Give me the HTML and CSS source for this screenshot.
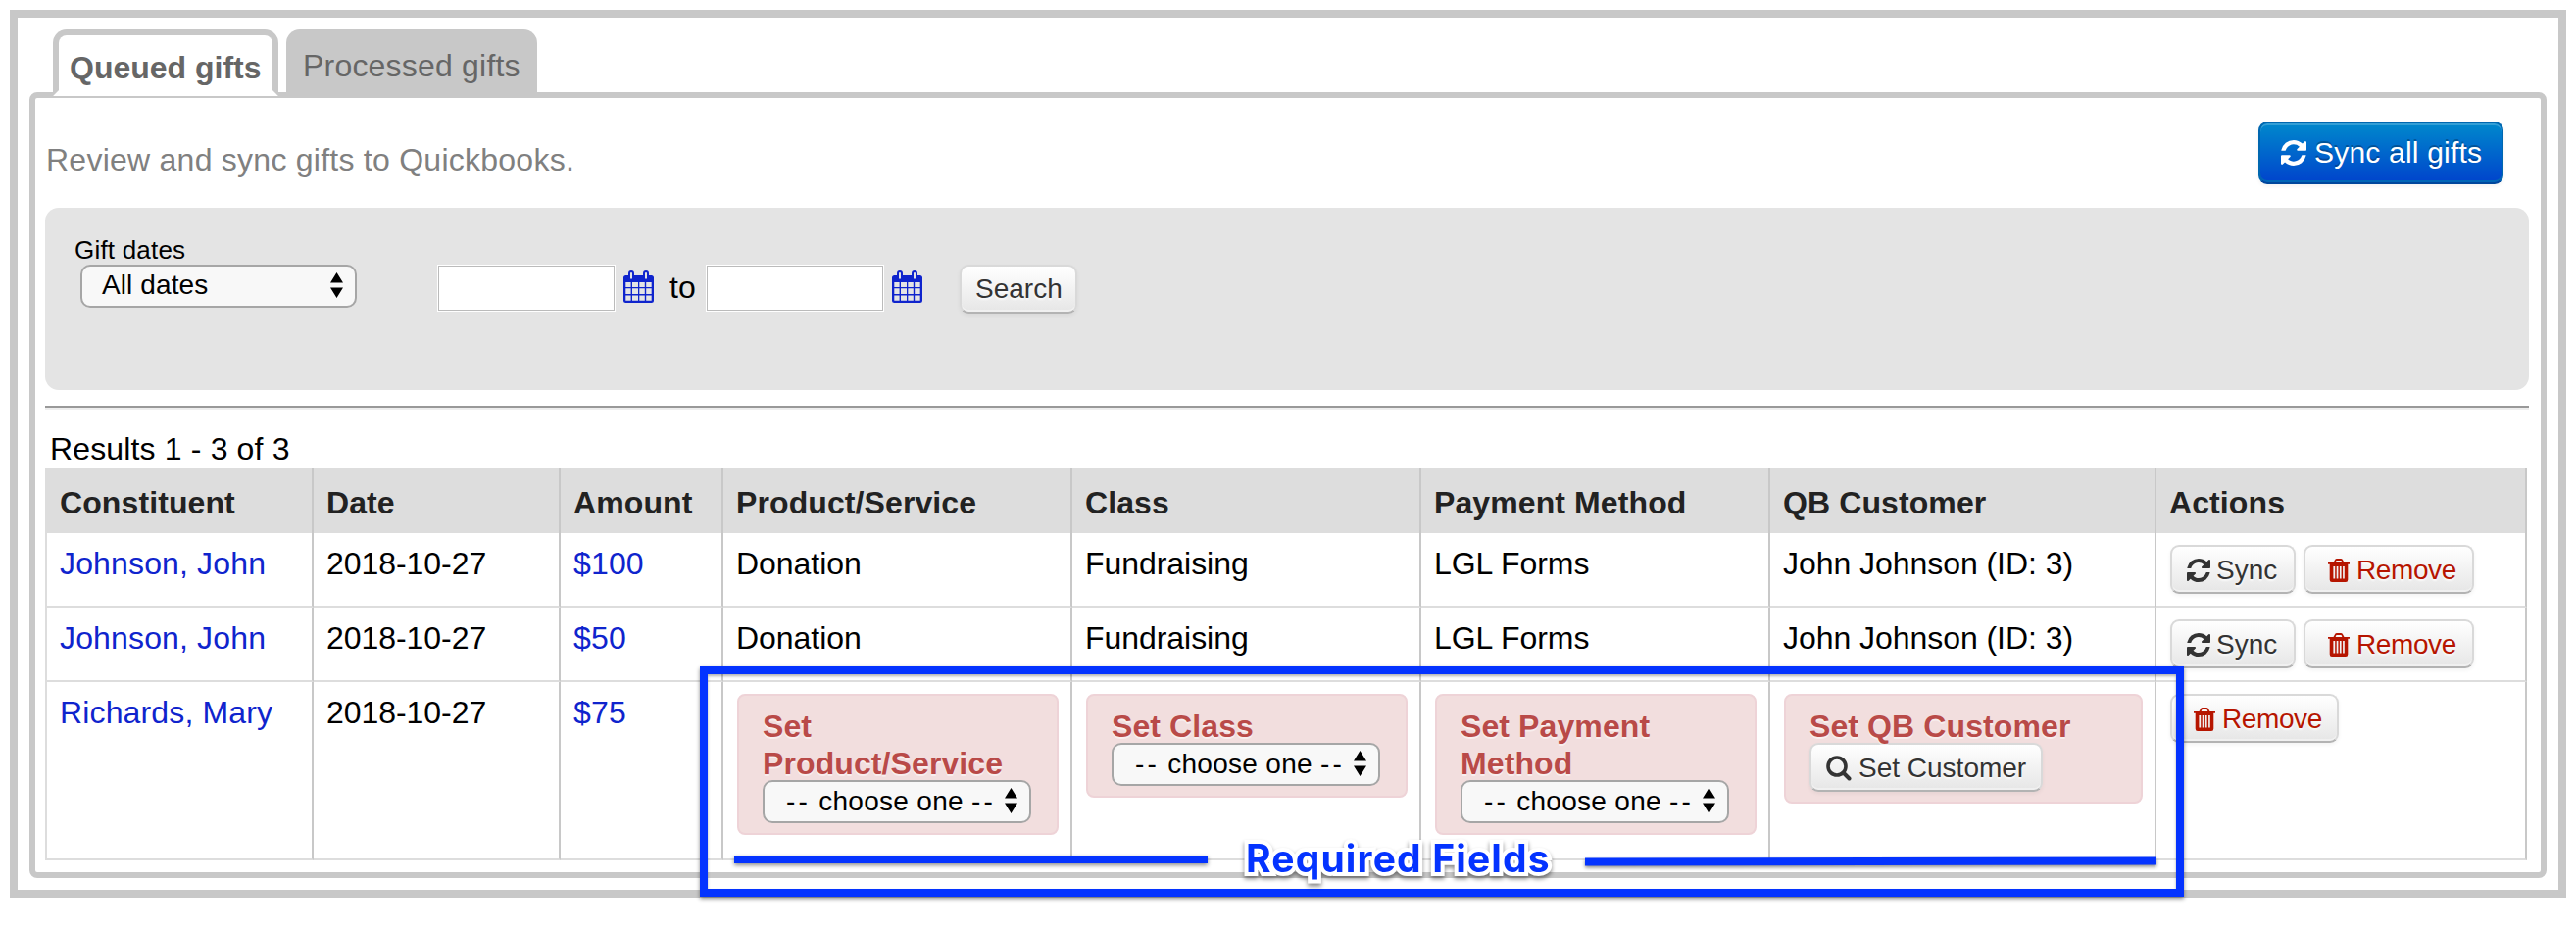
FILE: index.html
```html
<!DOCTYPE html>
<html lang="en">
<head>
    <meta charset="UTF-8">
    <meta name="viewport" content="width=device-width, initial-scale=1.0">
    <title>Quickbooks sync</title>
    <link rel="stylesheet" href="styles.css">
</head>
<body>
    <!-- icon set -->
    <svg class="sprite">
        <symbol id="icon-refresh" viewBox="0 0 1536 1536">
            <path d="M1511 928q0 5-1 7-64 268-268 434.500T764 1536q-146 0-282.500-55T238 1324l-129 129q-19 19-45 19t-45-19-19-45V960q0-26 19-45t45-19h448q26 0 45 19t19 45-19 45l-137 137q71 66 161 102t187 36q134 0 250-65t186-179q11-17 53-117 8-23 30-23h192q13 0 22.500 9.500t9.500 22.500zM1536 128v448q0 26-19 45t-45 19h-448q-26 0-45-19t-19-45 19-45l138-138Q969 256 768 256q-134 0-250 65T332 500q-11 17-53 117-8 23-30 23H50q-13 0-22.500-9.500T18 608v-7q65-268 270-434.500T768 0q146 0 284 55.500T1297 212l130-129q19-19 45-19t45 19 19 45z"/>
        </symbol>
        <symbol id="icon-trash" viewBox="0 0 22 24">
            <path fill-rule="evenodd" d="M0 4h5.500L7 1.200Q7.600 0 9 0h4q1.400 0 2 1.200L16.500 4H22v1.800h-1.700V21.500Q20.300 24 18 24H4Q1.700 24 1.700 21.500V5.800H0zM7.600 4h6.800l-.9-2h-5zM5.400 8v12.500h1.800V8zM8.700 8v12.500h1.700V8zM11.900 8v12.500h1.700V8zM15.100 8v12.500h1.700V8z"/>
        </symbol>
        <symbol id="icon-calendar" viewBox="0 0 31 33">
            <path fill-rule="evenodd" d="M2.500 5H5V3Q5 0 8 0t3 3v2h9V3q0-3 3-3t3 3v2h2.500Q31 5 31 7.500v23Q31 33 28.500 33h-26Q0 33 0 30.500v-23Q0 5 2.500 5zM7 3v5.500h2V3q0-1-1-1T7 3zM22 3v5.500h2V3q0-1-1-1t-1 1zM2.300 12v5h5.300v-5zM9 12v5h6v-5zM16.300 12v5h5.500v-5zM23.200 12v5h5.500v-5zM2.300 18.300V24h5.300v-5.700zM9 18.300V24h6v-5.700zM16.300 18.300V24h5.500v-5.700zM23.200 18.300V24h5.500v-5.700zM2.300 25.500v5.300h5.300v-5.300zM9 25.500v5.300h6v-5.300zM16.300 25.500v5.300h5.500v-5.300zM23.200 25.500v5.300h5.500v-5.300z"/>
        </symbol>
        <symbol id="icon-search" viewBox="0 0 26 26">
            <circle cx="11" cy="11" r="9" fill="none" stroke="currentColor" stroke-width="3.600"/>
            <path d="M17.500 17.500l6 6" stroke="currentColor" stroke-width="4" stroke-linecap="round"/>
        </symbol>
        <symbol id="icon-arrows" viewBox="0 0 13 26">
            <path d="M6.500 0L13 10.500H0zM0 15.500h13L6.500 26z"/>
        </symbol>
    </svg>

    <div class="container">
        <ul class="tabs">
            <li class="tab active">Queued gifts</li>
            <li class="tab">Processed gifts</li>
        </ul>

        <div class="panel">
            <div class="intro">
                <p>Review and sync gifts to Quickbooks.</p>
                <button class="btn btn-primary"><svg class="icon-refresh"><use href="#icon-refresh"/></svg>Sync all gifts</button>
            </div>

            <div class="filters">
                <div class="filter-dates">
                    <label>Gift dates</label>
                    <div class="select">All dates<svg><use href="#icon-arrows"/></svg></div>
                </div>
                <div class="range">
                    <input type="text" class="date-input">
                    <svg class="calendar"><use href="#icon-calendar"/></svg>
                    <span class="to">to</span>
                    <input type="text" class="date-input">
                    <svg class="calendar"><use href="#icon-calendar"/></svg>
                    <button class="btn btn-search">Search</button>
                </div>
            </div>

            <hr>

            <p class="results">Results 1 - 3 of 3</p>
            <table class="gifts">
                <colgroup>
                    <col class="col-name"><col class="col-date"><col class="col-amount"><col class="col-field">
                    <col class="col-field"><col class="col-field"><col class="col-customer"><col class="col-actions">
                </colgroup>
                <thead>
                    <tr>
                        <th>Constituent</th>
                        <th>Date</th>
                        <th>Amount</th>
                        <th>Product/Service</th>
                        <th>Class</th>
                        <th>Payment Method</th>
                        <th>QB Customer</th>
                        <th>Actions</th>
                    </tr>
                </thead>
                <tbody>
                    <tr>
                        <td><a>Johnson, John</a></td>
                        <td>2018-10-27</td>
                        <td><a>$100</a></td>
                        <td>Donation</td>
                        <td>Fundraising</td>
                        <td>LGL Forms</td>
                        <td>John Johnson (ID: 3)</td>
                        <td>
                            <div class="actions">
                                <button class="btn btn-sync"><svg class="icon-refresh"><use href="#icon-refresh"/></svg>Sync</button>
                                <button class="btn btn-remove"><svg class="icon-trash"><use href="#icon-trash"/></svg>Remove</button>
                            </div>
                        </td>
                    </tr>
                    <tr>
                        <td><a>Johnson, John</a></td>
                        <td>2018-10-27</td>
                        <td><a>$50</a></td>
                        <td>Donation</td>
                        <td>Fundraising</td>
                        <td>LGL Forms</td>
                        <td>John Johnson (ID: 3)</td>
                        <td>
                            <div class="actions">
                                <button class="btn btn-sync"><svg class="icon-refresh"><use href="#icon-refresh"/></svg>Sync</button>
                                <button class="btn btn-remove"><svg class="icon-trash"><use href="#icon-trash"/></svg>Remove</button>
                            </div>
                        </td>
                    </tr>
                    <tr class="incomplete">
                        <td><a>Richards, Mary</a></td>
                        <td>2018-10-27</td>
                        <td><a>$75</a></td>
                        <td>
                            <div class="alert">
                                <strong>Set Product/Service</strong>
                                <div class="select"><span class="dash">--</span> choose one <span class="dash">--</span><svg><use href="#icon-arrows"/></svg></div>
                            </div>
                        </td>
                        <td>
                            <div class="alert">
                                <strong>Set Class</strong>
                                <div class="select"><span class="dash">--</span> choose one <span class="dash">--</span><svg><use href="#icon-arrows"/></svg></div>
                            </div>
                        </td>
                        <td>
                            <div class="alert">
                                <strong>Set Payment Method</strong>
                                <div class="select"><span class="dash">--</span> choose one <span class="dash">--</span><svg><use href="#icon-arrows"/></svg></div>
                            </div>
                        </td>
                        <td>
                            <div class="alert">
                                <strong>Set QB Customer</strong>
                                <button class="btn btn-customer"><svg class="icon-search"><use href="#icon-search"/></svg>Set Customer</button>
                            </div>
                        </td>
                        <td>
                            <div class="actions">
                                <button class="btn btn-remove only"><svg class="icon-trash"><use href="#icon-trash"/></svg>Remove</button>
                            </div>
                        </td>
                    </tr>
                </tbody>
            </table>
        </div>
    </div>

    <!-- callout over the last row -->
    <div class="callout">
        <div class="callout-line left"></div>
        <div class="callout-text">Required Fields</div>
        <div class="callout-line right"></div>
    </div>
</body>
</html>
```
FILE: styles.css
```css
* {
    box-sizing: border-box;
}
body {
    margin: 0;
    padding: 10px;
    height: 948px;
    position: relative;
    overflow: hidden;
    background-color: #fff;
    font-family: "Liberation Sans", Arial, sans-serif;
    font-size: 32px;
    line-height: 38px;
    letter-spacing: 0.2px;
    color: #000;
}
.sprite {
    display: none;
}
svg {
    fill: currentColor;
    flex: none;
}
p {
    margin: 0;
}
.container {
    width: 2608px;
    height: 906px;
    border: 8px solid #c8c8c8;
    padding: 12px;
}

/* tabs */
.tabs {
    display: flex;
    gap: 8px;
    align-items: flex-start;
    list-style: none;
    margin: 0;
    padding: 0 0 0 24px;
    height: 64px;
}
.tab {
    width: 256px;
    height: 64px;
    padding: 18px 0 0 17px;
    border-radius: 14px 14px 0 0;
    background-color: #c8c8c8;
    color: #666;
    white-space: nowrap;
}
.tab.active {
    width: 230px;
    height: 68px;
    padding: 14px 0 0 11px;
    position: relative;
    border: 6px solid #c8c8c8;
    border-bottom-color: #fff;
    background-color: #fff;
    font-weight: bold;
    letter-spacing: 0;
}

/* panel */
.panel {
    width: 2568px;
    height: 802px;
    border: 6px solid #c8c8c8;
    border-radius: 8px;
    padding: 24px 12px 0 10px;
}
.intro {
    display: flex;
    justify-content: space-between;
    align-items: flex-start;
    height: 88px;
    padding-right: 26px;
    color: #808080;
}
.intro p {
    padding: 20px 0 0 1px;
    letter-spacing: 0.25px;
}
.filters {
    display: flex;
    height: 186px;
    padding: 42px 30px;
    border-radius: 14px;
    background-color: #e4e4e4;
}
.filter-dates {
    width: 370px;
}
.filter-dates label {
    display: block;
    height: 16px;
    line-height: 0;
    padding-top: 1px;
    font-size: 26px;
}
.filters .select {
    width: 282px;
    margin-left: 6px;
}
.range {
    display: flex;
    align-items: flex-start;
    padding-top: 16px;
}
.date-input {
    width: 182px;
    height: 48px;
    border: 1px solid #fff;
    outline: 1px solid #bbb;
    outline-offset: -2px;
    background-color: #fff;
}
.calendar {
    width: 31px;
    height: 33px;
    margin: 6px 7px 0 8px;
    color: #0f24cd;
}
.to {
    width: 46px;
    padding: 4px 0 0 9px;
}
hr {
    height: 4px;
    margin: 16px 0 0;
    border: 0;
    border-top: 2px solid #999;
    background-color: #eee;
}
.results {
    height: 60px;
    padding: 21px 0 0 5px;
    letter-spacing: 0.15px;
}

/* select boxes */
.select {
    display: flex;
    align-items: center;
    position: relative;
    width: 274px;
    height: 44px;
    padding: 0 0 2px 20px;
    border: 2px solid #a6a6a6;
    border-radius: 10px;
    background-color: #f8f8f8;
    color: #000;
    font-size: 28px;
    letter-spacing: 0.1px;
    white-space: pre;
}
.alert .select {
    padding: 0 0 0 22px;
    letter-spacing: 0.3px;
}
.select svg {
    position: absolute;
    right: 12px;
    top: 6px;
    width: 13px;
    height: 26px;
}
.select .dash {
    letter-spacing: 3.200px;
}

/* buttons */
.btn {
    display: flex;
    align-items: center;
    height: 50px;
    padding: 1px 0 0 15px;
    border: 2px solid #d9d9d9;
    border-bottom-color: #b3b3b3;
    border-radius: 9px;
    background: linear-gradient(#fff, #e6e6e6);
    box-shadow: inset 0 -2px 0 rgba(255,255,255,0.4), 0 2px 4px rgba(0,0,0,0.05);
    color: #333;
    font-family: inherit;
    font-size: 28px;
    text-shadow: 0 2px 2px rgba(255,255,255,0.75);
    white-space: nowrap;
    cursor: pointer;
}
.btn-search {
    width: 120px;
    margin-left: 31px;
    padding: 0 0 0 14px;
}
.btn-sync {
    width: 128px;
}
.btn-remove {
    width: 174px;
    padding-left: 23px;
    color: #b61500;
    letter-spacing: -0.4px;
}
.btn-remove.only {
    width: 172px;
    padding-left: 22px;
}
.btn-customer {
    width: 238px;
}
.icon-refresh {
    width: 24px;
    height: 24px;
    margin-right: 6px;
}
.icon-trash {
    width: 22px;
    height: 24px;
    margin-right: 7px;
}
.icon-search {
    width: 26px;
    height: 26px;
    margin-right: 7px;
}
.btn-primary {
    width: 250px;
    height: 64px;
    padding: 0 0 1px 21px;
    border-color: #0067b0;
    border-bottom-color: #00479c;
    background: linear-gradient(#08c, #04c);
    box-shadow: inset 0 2px 0 rgba(255,255,255,0.2), inset 0 -2px 0 rgba(0,136,160,0.5), 0 2px 4px rgba(0,0,0,0.05);
    color: #fff;
    font-size: 30px;
    letter-spacing: 0.2px;
    text-shadow: 0 -2px 0 rgba(0,0,0,0.25);
}
.btn-primary .icon-refresh {
    width: 26px;
    height: 26px;
    margin-right: 8px;
}

/* table */
.gifts {
    width: 2532px;
    table-layout: fixed;
    border-collapse: separate;
    border-spacing: 0;
    border-left: 2px solid #ddd;
}
.col-name { width: 272px; }
.col-date { width: 252px; }
.col-amount { width: 166px; }
.col-field { width: 356px; }
.col-customer { width: 394px; }
.col-actions { width: 378px; }
.gifts th {
    height: 66px;
    padding: 4px 0 0 13px;
    border-right: 2px solid #c8c8c8;
    background-color: #ddd;
    color: #222;
    text-align: left;
    letter-spacing: 0.1px;
}
.gifts td {
    height: 76px;
    padding: 12px 12px 0 13px;
    border-right: 2px solid #c8c8c8;
    border-bottom: 2px solid #ddd;
    letter-spacing: -0.05px;
    vertical-align: top;
    white-space: nowrap;
}
.gifts .incomplete td {
    height: 182px;
}
.gifts a {
    color: #0f24cd;
    letter-spacing: 0.15px;
}
.actions {
    display: flex;
    gap: 8px;
    margin-left: 1px;
}
.alert {
    margin-left: 1px;
    padding: 12px 0 10px 24px;
    border: 2px solid #eed3d7;
    border-radius: 8px;
    background-color: #f2dede;
    color: #b94a48;
    letter-spacing: 0.1px;
    white-space: normal;
}
.alert strong {
    display: block;
    margin-bottom: -2px;
    padding-right: 24px;
    text-shadow: 0 2px 0 rgba(255,255,255,0.5);
}

/* callout */
.callout {
    position: absolute;
    left: 714px;
    top: 680px;
    width: 1514px;
    height: 235px;
    border: 8px solid #0433ff;
    box-shadow: 0 2px 4px rgba(0,0,0,0.45), inset 0 2px 3px rgba(0,0,0,0.3);
}
.callout-line {
    position: absolute;
    height: 8px;
    background-color: #0433ff;
    box-shadow: 0 2px 4px rgba(0,0,0,0.45);
}
.callout-line.left {
    left: 27px;
    top: 185px;
    width: 483px;
}
.callout-line.right {
    left: 895px;
    top: 187px;
    width: 583px;
    transform: rotate(-0.1deg);
}
.callout-text {
    position: absolute;
    left: 549px;
    top: 164px;
    font-family: Inter, "Liberation Sans", sans-serif;
    font-size: 39px;
    line-height: 48px;
    font-weight: 700;
    letter-spacing: 1.15px;
    color: #0433ff;
    -webkit-text-stroke: 8px #fff;
    paint-order: stroke fill;
    filter: drop-shadow(0 3px 2px rgba(0,0,0,0.45));
    white-space: nowrap;
}
```
